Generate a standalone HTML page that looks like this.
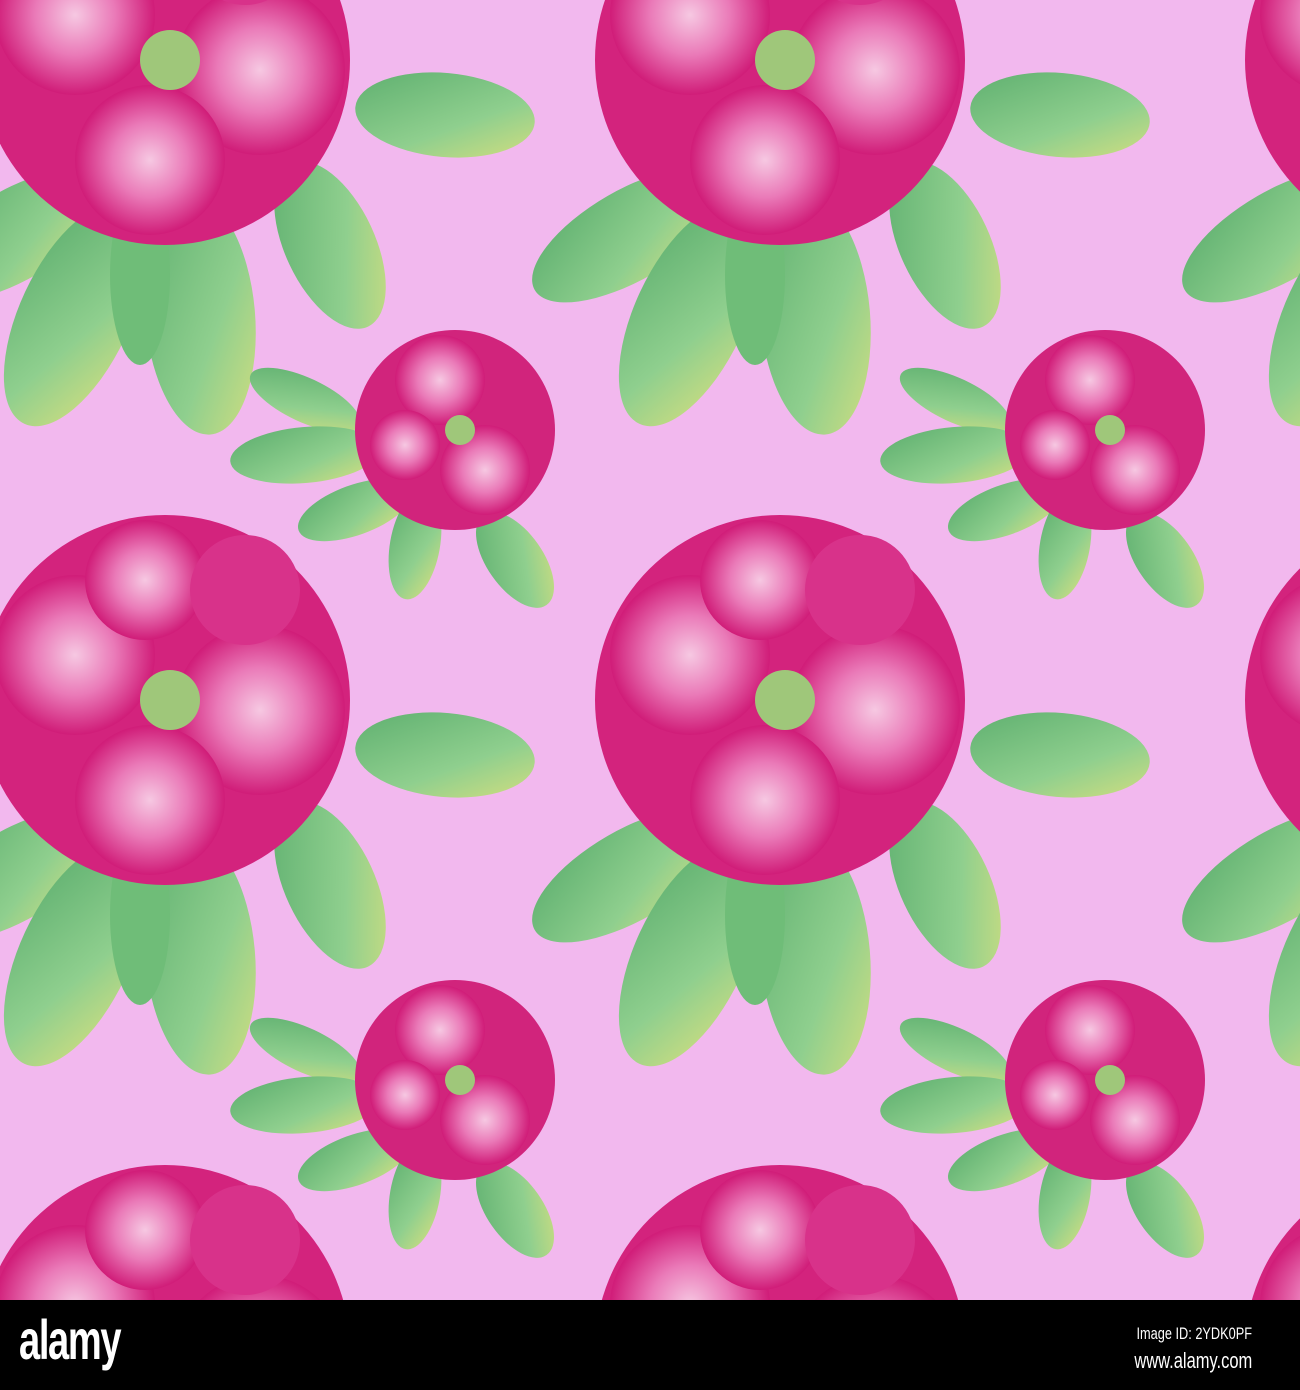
<!DOCTYPE html>
<html style="overflow:hidden;width:1300px;height:1390px"><head><style>
body{margin:0;width:1300px;height:1390px;overflow:hidden;background:#f2b8ee;font-family:"Liberation Sans",sans-serif;position:relative}
svg{position:absolute;left:0;top:0;display:block}
.bar{position:absolute;left:0;top:1300px;width:1300px;height:90px;background:#000;color:#fff;overflow:hidden}
</style></head><body>
<svg width="1300" height="1300" viewBox="0 0 1300 1300">
<defs>
<linearGradient id="lf" x1="0" y1="0" x2="1" y2="1"><stop offset="0" stop-color="#5cae6e"/><stop offset="0.6" stop-color="#8fcf8e"/><stop offset="1" stop-color="#d7df7e"/></linearGradient>
<radialGradient id="pt" cx="0.5" cy="0.5" r="0.5"><stop offset="0" stop-color="#f6c8e2"/><stop offset="0.5" stop-color="#ea7ab8"/><stop offset="1" stop-color="#d01c78"/></radialGradient>
<g id="big">
<ellipse cx="280" cy="55" rx="90" ry="42" fill="url(#lf)" transform="rotate(5 280 55)"/>
<ellipse cx="-150" cy="175" rx="110" ry="45" fill="url(#lf)" transform="rotate(-30 -150 175)"/>
<ellipse cx="-90" cy="255" rx="55" ry="120" fill="url(#lf)" transform="rotate(25 -90 255)"/>
<ellipse cx="35" cy="255" rx="55" ry="120" fill="url(#lf)" transform="rotate(-5 35 255)"/>
<ellipse cx="-25" cy="215" rx="30" ry="90" fill="#6fbd78"/>
<ellipse cx="165" cy="185" rx="45" ry="90" fill="url(#lf)" transform="rotate(-25 165 185)"/>
<circle cx="0" cy="0" r="185" fill="#d3237d"/>
<circle cx="-90" cy="-45" r="80" fill="url(#pt)"/>
<circle cx="95" cy="10" r="85" fill="url(#pt)"/>
<circle cx="-15" cy="100" r="75" fill="url(#pt)"/>
<circle cx="-20" cy="-120" r="60" fill="url(#pt)"/>
<circle cx="80" cy="-110" r="55" fill="#d8328a"/>
<circle cx="5" cy="0" r="30" fill="#9fc77a"/>
</g>
<g id="small">
<ellipse cx="-150" cy="-30" rx="60" ry="22" fill="url(#lf)" transform="rotate(25 -150 -30)"/>
<ellipse cx="-150" cy="25" rx="75" ry="28" fill="url(#lf)" transform="rotate(-5 -150 25)"/>
<ellipse cx="-100" cy="80" rx="60" ry="25" fill="url(#lf)" transform="rotate(-20 -100 80)"/>
<ellipse cx="-40" cy="115" rx="25" ry="55" fill="url(#lf)" transform="rotate(10 -40 115)"/>
<ellipse cx="60" cy="130" rx="28" ry="55" fill="url(#lf)" transform="rotate(-35 60 130)"/>
<circle cx="0" cy="0" r="100" fill="#d1247c"/>
<circle cx="-15" cy="-50" r="45" fill="url(#pt)"/>
<circle cx="30" cy="40" r="45" fill="url(#pt)"/>
<circle cx="-50" cy="15" r="35" fill="url(#pt)"/>
<circle cx="5" cy="0" r="15" fill="#9fc77a"/>
</g>
</defs>
<use href="#big" x="165" y="60"/>
<use href="#big" x="780" y="60"/>
<use href="#big" x="1430" y="60"/>
<use href="#big" x="165" y="700"/>
<use href="#big" x="780" y="700"/>
<use href="#big" x="1430" y="700"/>
<use href="#big" x="165" y="1350"/>
<use href="#big" x="780" y="1350"/>
<use href="#big" x="1430" y="1350"/>
<use href="#small" x="455" y="430"/>
<use href="#small" x="1105" y="430"/>
<use href="#small" x="455" y="1080"/>
<use href="#small" x="1105" y="1080"/>
</svg>
<div class="bar">
<div style="position:absolute;left:19px;top:10px;font-size:56px;line-height:60px;font-weight:bold;letter-spacing:-2px;transform:scaleX(0.68);transform-origin:left">alamy</div>
<div style="position:absolute;right:48px;top:24px;font-size:17px;line-height:20px;transform:scaleX(0.75);transform-origin:right">Image ID: 2YDK0PF</div>
<div style="position:absolute;right:48px;top:48px;font-size:22px;line-height:26px;transform:scaleX(0.75);transform-origin:right">www.alamy.com</div>
</div>
</body></html>
